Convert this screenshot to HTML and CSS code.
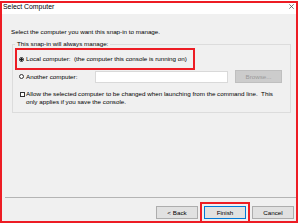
FILE: index.html
```html
<!DOCTYPE html>
<html>
<head>
<meta charset="utf-8">
<link rel="stylesheet" href="styles.css">
</head>
<body>
<div class="window">
  <div class="titlebar">
    <span class="title">Select Computer</span>
    <svg class="close" width="5" height="5" viewBox="0 0 5 5"><path d="M0.3 0.3L4.7 4.7M4.7 0.3L0.3 4.7" stroke="#555" stroke-width="0.8" fill="none"/></svg>
  </div>
  <div class="panel">
    <div class="content">
      <p class="intro">Select the computer you want this snap-in to manage.</p>
      <fieldset class="group">
        <legend class="legend">This snap-in will always manage:</legend>
        <div class="row row-local">
          <span class="radio on"></span>
          <span class="label">Local computer:&nbsp; (the computer this console is running on)</span>
        </div>
        <div class="row row-other">
          <span class="radio"></span>
          <span class="label label-other">Another computer:</span>
          <span class="textbox"></span>
          <span class="btn btn-disabled">Browse...</span>
        </div>
        <div class="row row-check">
          <span class="checkbox"></span>
          <span class="label">Allow the selected computer to be changed when launching from the command line.&nbsp; This<br>only applies if you save the console.</span>
        </div>
      </fieldset>
    </div>
    <div class="spacer"></div>
    <div class="separator"></div>
    <div class="footer">
      <span class="btn">&lt; Back</span>
      <span class="mark"><span class="btn btn-default">Finish</span></span>
      <span class="btn">Cancel</span>
    </div>
  </div>
</div>
</body>
</html>
```
FILE: styles.css
```css
html, body {
  margin: 0;
  padding: 0;
  background: #ffffff;
}
body {
  font-family: "Liberation Sans", Arial, sans-serif;
  font-size: 6.25px;
  color: #000;
}
.window {
  box-sizing: border-box;
  width: 298px;
  height: 222px;
  margin-top: 1px;
  border: 2px solid #ed1c24;
  display: flex;
  flex-direction: column;
  background: #f0f0f0;
}
.titlebar {
  height: 11px;
  flex: none;
  background: #ffffff;
  display: flex;
  justify-content: space-between;
  align-items: flex-start;
  padding: 0 2px 0 1px;
}
.title {
  font-size: 6.9px;
  line-height: 8px;
  color: #000;
}
.close {
  margin-top: 1px;
  display: block;
}
.panel {
  flex: 1;
  display: flex;
  flex-direction: column;
  min-height: 0;
}
.content {
  padding: 14px 5px 0 9px;
}
.intro {
  margin: 0;
  line-height: 8px;
}
.group {
  margin: 4px 0 0 1px;
  padding: 0 2px 6px 2px;
  border: 1px solid #dcdcdc;
  min-width: 0;
}
.legend {
  padding: 0 2px;
  line-height: 8px;
}
.row {
  display: flex;
  align-items: center;
  line-height: 8px;
}
.row-local {
  box-sizing: border-box;
  width: 180px;
  height: 22px;
  border: 2px solid #ed1c24;
  padding-left: 2px;
}
.row-other {
  height: 13px;
  padding-left: 4px;
}
.row-check {
  align-items: flex-start;
  margin-top: 7px;
  padding-left: 5px;
}
.radio {
  box-sizing: border-box;
  width: 5px;
  height: 5px;
  border: 1px solid #333;
  border-radius: 50%;
  background: #fff;
  margin-right: 2px;
  flex: none;
}
.radio.on {
  background: radial-gradient(circle, #1a1a1a 0 1px, #fff 1.4px);
}
.checkbox {
  box-sizing: border-box;
  width: 5px;
  height: 5px;
  border: 1px solid #333;
  background: #fff;
  margin: 2px 1px 0 0;
  flex: none;
}
.label-other {
  width: 69px;
  flex: none;
}
.textbox {
  box-sizing: border-box;
  width: 133px;
  height: 12px;
  background: #fff;
  border: 1px solid #d9d9d9;
  margin-top: 1px;
  flex: none;
}
.btn {
  box-sizing: border-box;
  width: 42px;
  height: 13px;
  display: flex;
  align-items: center;
  justify-content: center;
  background: #e1e1e1;
  border: 1px solid #adadad;
  line-height: 8px;
  flex: none;
}
.btn-disabled {
  width: 47px;
  margin-left: 7px;
  background: #cccccc;
  border-color: #bfbfbf;
  color: #9a9a9a;
}
.btn-default {
  border-color: #0078d7;
}
.spacer {
  flex: 1;
}
.separator {
  height: 1px;
  background: #b4b4b4;
  margin-left: 3px;
}
.footer {
  display: flex;
  justify-content: flex-end;
  align-items: center;
  gap: 2px;
  padding: 8px 2px 2px 0;
}
.mark {
  border: 2px solid #ed1c24;
  padding: 2px;
  margin: -4px 0;
  display: flex;
}
```
